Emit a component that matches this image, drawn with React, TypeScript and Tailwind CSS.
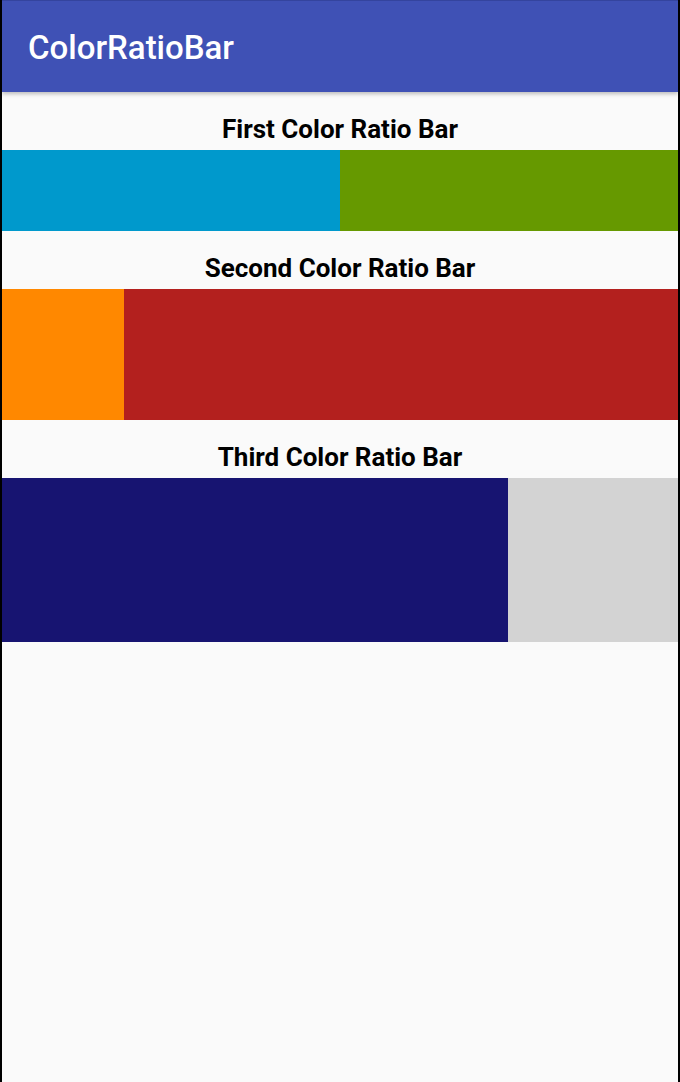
import React from "react";

const bars = [
  { title: "First Color Ratio Bar", h: "h-[81px]", a: 0.5, ca: "bg-[#0099cc]", cb: "bg-[#669900]" },
  { title: "Second Color Ratio Bar", h: "h-[131px]", a: 0.18, ca: "bg-[#ff8800]", cb: "bg-[#b3201e]" },
  { title: "Third Color Ratio Bar", h: "h-[164px]", a: 0.749, ca: "bg-[#171471]", cb: "bg-[#d3d3d3]" },
];

export default function App() {
  return (
    <div
      className="w-[680px] h-[1082px] bg-black px-[2px] flex flex-col"
      style={{ fontFamily: "Roboto, 'Noto Sans', sans-serif" }}
    >
      <div className="flex-1 bg-[#fafafa] flex flex-col">
        <div className="relative z-10 h-[92px] bg-[#3f51b5] border-t border-[#34449e] flex items-center pl-[26px] shadow-[0_2px_4px_rgba(0,0,0,0.25)]">
          <span className="text-white text-[33px] font-medium leading-none mt-[1px]">ColorRatioBar</span>
        </div>
        {bars.map((b) => (
          <div key={b.title} className="flex flex-col">
            <div className="h-[58px] flex items-center justify-center">
              <span className="text-black text-[26px] font-bold leading-none mt-[15px]">{b.title}</span>
            </div>
            <div className={`flex ${b.h}`}>
              <div className={b.ca} style={{ width: `${b.a * 100}%` }} />
              <div className={`flex-1 ${b.cb}`} />
            </div>
          </div>
        ))}
      </div>
    </div>
  );
}
